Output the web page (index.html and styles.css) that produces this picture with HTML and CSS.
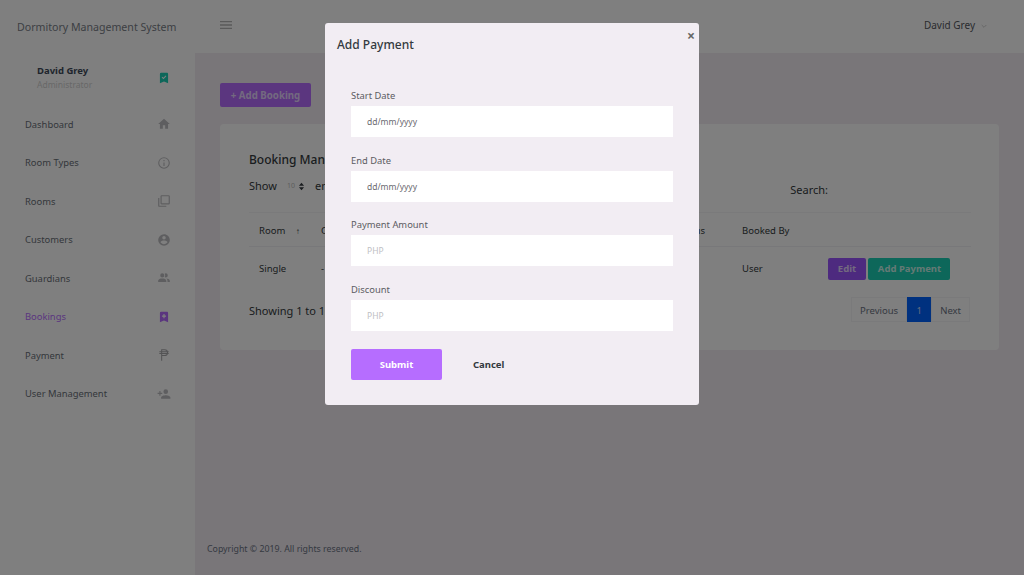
FILE: index.html
```html
<!DOCTYPE html>
<html lang="en">
<head>
    <meta charset="UTF-8">
    <meta name="viewport" content="width=device-width, initial-scale=1.0">
    <title>Dormitory Management System</title>
    <link rel="stylesheet" href="styles.css">
</head>
<body>
    <header class="navbar">
        <div class="brand">Dormitory Management System</div>
        <div class="navbar-main">
            <svg class="menu-icon" viewBox="0 0 24 24"><path d="M3,6H21V8H3V6M3,11H21V13H3V11M3,16H21V18H3V16Z"/></svg>
            <div class="nav-user">David Grey
                <svg class="chevron" viewBox="0 0 24 24"><path d="M5,9L12,16L19,9" fill="none" stroke="currentColor" stroke-width="2"/></svg>
            </div>
        </div>
    </header>

    <div class="page">
        <aside class="sidebar">
            <div class="profile">
                <div>
                    <div class="profile-name">David Grey</div>
                    <div class="profile-role">Administrator</div>
                </div>
                <svg class="nav-icon icon-green" viewBox="0 0 24 24"><path fill-rule="evenodd" d="M17,3H7A2,2 0 0,0 5,5V21L12,18L19,21V5C19,3.89 18.1,3 17,3ZM11,14L8,11L9.2,9.8L11,11.6L14.8,7.8L16,9Z"/></svg>
            </div>
            <a class="nav-item">Dashboard
                <svg class="nav-icon" viewBox="0 0 24 24"><path d="M10,20V14H14V20H19V12H22L12,3L2,12H5V20H10Z"/></svg></a>
            <a class="nav-item">Room Types
                <svg class="nav-icon" viewBox="0 0 24 24"><path d="M11,9H13V7H11M12,20C7.59,20 4,16.41 4,12C4,7.59 7.59,4 12,4C16.41,4 20,7.59 20,12C20,16.41 16.41,20 12,20M12,2A10,10 0 0,0 2,12A10,10 0 0,0 12,22A10,10 0 0,0 22,12A10,10 0 0,0 12,2M11,17H13V11H11V17Z"/></svg></a>
            <a class="nav-item">Rooms
                <svg class="nav-icon" viewBox="0 0 24 24"><path d="M20,16V4H8V16H20M22,16A2,2 0 0,1 20,18H8C6.89,18 6,17.1 6,16V4C6,2.89 6.89,2 8,2H20A2,2 0 0,1 22,4V16M16,20V22H4A2,2 0 0,1 2,20V7H4V20H16Z"/></svg></a>
            <a class="nav-item">Customers
                <svg class="nav-icon" viewBox="0 0 24 24"><path d="M12,19.2C9.5,19.2 7.29,17.92 6,16C6.03,14 10,12.9 12,12.9C14,12.9 17.97,14 18,16C16.71,17.92 14.5,19.2 12,19.2M12,5A3,3 0 0,1 15,8A3,3 0 0,1 12,11A3,3 0 0,1 9,8A3,3 0 0,1 12,5M12,2A10,10 0 0,0 2,12A10,10 0 0,0 12,22A10,10 0 0,0 22,12C22,6.47 17.5,2 12,2Z"/></svg></a>
            <a class="nav-item">Guardians
                <svg class="nav-icon" viewBox="0 0 24 24"><path d="M16 17V19H2V17S2 13 9 13 16 17 16 17M12.5 7.5A3.5 3.5 0 1 0 9 11A3.5 3.5 0 0 0 12.5 7.5M15.94 13A5.32 5.32 0 0 1 18 17V19H22V17S22 13.37 15.94 13M15 4A3.39 3.39 0 0 0 13.07 4.59A5 5 0 0 1 13.07 10.41A3.39 3.39 0 0 0 15 11A3.5 3.5 0 0 0 15 4Z"/></svg></a>
            <a class="nav-item active">Bookings
                <svg class="nav-icon" viewBox="0 0 24 24"><path fill-rule="evenodd" d="M17,3H7A2,2 0 0,0 5,5V21L12,18L19,21V5C19,3.89 18.1,3 17,3ZM11,7H13V9.5H15.5V11.5H13V14H11V11.5H8.5V9.5H11Z"/></svg></a>
            <a class="nav-item">Payment
                <svg class="nav-icon icon-peso" viewBox="0 0 24 24"><path d="M8,22V3H13A5,5 0 0,1 13,13H8M4,6.5H20M4,9.5H20" fill="none" stroke="currentColor" stroke-width="1.8"/></svg></a>
            <a class="nav-item">User Management
                <svg class="nav-icon" viewBox="0 0 24 24"><path d="M15,14C12.33,14 7,15.33 7,18V20H23V18C23,15.33 17.67,14 15,14M6,10V7H4V10H1V12H4V15H6V12H9V10M15,12A4,4 0 0,0 19,8A4,4 0 0,0 15,4A4,4 0 0,0 11,8A4,4 0 0,0 15,12Z"/></svg></a>
        </aside>

        <main class="content">
            <div class="content-body">
                <button class="btn btn-add">+ Add Booking</button>
                <section class="card">
                    <h2>Booking Management</h2>
                    <div class="table-tools">
                        <div class="show-entries">Show
                            <span class="select-box">10
                                <svg class="select-arrows" viewBox="0 0 10 14"><path d="M5,1L9,6H1ZM5,13L1,8H9Z"/></svg>
                            </span>
                            entries
                        </div>
                        <div class="search-box">Search:</div>
                    </div>
                    <table class="booking-table">
                        <thead>
                            <tr>
                                <th class="col-room">Room <span class="sort-mark">↑</span></th>
                                <th class="col-info">Check In</th>
                                <th class="col-status">Status</th>
                                <th class="col-by">Booked By</th>
                                <th></th>
                            </tr>
                        </thead>
                        <tbody>
                            <tr>
                                <td>Single</td>
                                <td>-</td>
                                <td class="cell-status">Active</td>
                                <td>User</td>
                                <td class="col-actions">
                                    <button class="btn btn-edit">Edit</button>
                                    <button class="btn btn-pay">Add Payment</button>
                                </td>
                            </tr>
                        </tbody>
                    </table>
                    <div class="table-foot">
                        <div class="table-info">Showing 1 to 1 of 1 entries</div>
                        <div class="pager">
                            <span class="page-link">Previous</span>
                            <span class="page-link current">1</span>
                            <span class="page-link">Next</span>
                        </div>
                    </div>
                </section>
            </div>
            <footer class="footer">Copyright © 2019. All rights reserved.</footer>
        </main>
    </div>

    <div class="overlay"></div>

    <div class="modal">
        <span class="modal-close">×</span>
        <h3>Add Payment</h3>
        <form class="modal-form">
            <div class="form-group">
                <label for="startDate">Start Date</label>
                <input type="text" class="date-input" id="startDate" placeholder="dd/mm/yyyy">
            </div>
            <div class="form-group">
                <label for="endDate">End Date</label>
                <input type="text" class="date-input" id="endDate" placeholder="dd/mm/yyyy">
            </div>
            <div class="form-group">
                <label for="paymentAmount">Payment Amount</label>
                <input type="text" id="paymentAmount" placeholder="PHP">
            </div>
            <div class="form-group">
                <label for="discount">Discount</label>
                <input type="text" id="discount" placeholder="PHP">
            </div>
            <div class="form-actions">
                <button type="button" class="btn btn-submit">Submit</button>
                <button type="button" class="btn btn-cancel">Cancel</button>
            </div>
        </form>
    </div>
</body>
</html>
```

FILE: styles.css
```css
* {
    box-sizing: border-box;
}
body {
    margin: 0;
    height: 575px;
    overflow: hidden;
    display: flex;
    flex-direction: column;
    font-family: "Noto Sans", sans-serif;
    font-size: 10px;
    color: #343a40;
    background-color: #f2edf3;
}
.navbar {
    height: 53px;
    flex-shrink: 0;
    display: flex;
    background-color: white;
}
.brand {
    width: 195px;
    padding: 19px 0 0 17px;
    font-size: 10.6px;
    line-height: 16px;
    color: #7a7f88;
    white-space: nowrap;
}
.navbar-main {
    flex: 1;
    display: flex;
    justify-content: space-between;
    padding: 17px 36px 0 23px;
}
.menu-icon {
    width: 16px;
    height: 16px;
    fill: #b5b5b5;
}
.nav-user {
    display: flex;
    gap: 5px;
    height: 16px;
    font-size: 10px;
    line-height: 16px;
    color: #55585e;
}
.chevron {
    width: 8px;
    height: 8px;
    margin-top: 5px;
    color: #b5b5b5;
}
.page {
    flex: 1;
    display: flex;
    min-height: 0;
}
.sidebar {
    width: 195px;
    flex-shrink: 0;
    padding-top: 10px;
    background-color: white;
}
.profile {
    height: 42px;
    padding: 0 24px 12px 37px;
    display: flex;
    justify-content: space-between;
    align-items: center;
}
.profile-name {
    font-size: 9.5px;
    font-weight: bold;
    line-height: 14px;
    color: #3e4b5b;
}
.profile-role {
    font-size: 8.5px;
    line-height: 14px;
    color: #d0d0d0;
}
.nav-item {
    height: 38.5px;
    padding: 0 24px 0 25px;
    display: flex;
    justify-content: space-between;
    align-items: center;
    font-size: 9.4px;
    color: #6a6f78;
}
.nav-icon {
    width: 14px;
    height: 14px;
    fill: #bdbdc0;
    color: #bdbdc0;
}
.icon-green {
    fill: #1bcfb4;
}
.icon-peso {
    color: #a8a8ab;
}
.nav-item.active {
    color: #b66dff;
}
.nav-item.active .nav-icon {
    fill: #b66dff;
}
.content {
    flex: 1;
    display: flex;
    flex-direction: column;
    min-width: 0;
}
.content-body {
    flex: 1;
    padding: 30px 25px 0;
}
.btn {
    border: none;
    font-family: inherit;
    font-weight: bold;
    color: white;
    border-radius: 2px;
}
.btn-add {
    display: block;
    width: 91px;
    height: 24px;
    padding: 0;
    font-size: 9.7px;
    color: #e6d4ff;
    background-color: #b66dff;
    margin-bottom: 17px;
}
.card {
    height: 226px;
    padding: 27px 29px 0;
    border-radius: 4px;
    background-color: white;
}
h2 {
    margin: 0;
    font-size: 12px;
    font-weight: 500;
    line-height: 18px;
    color: #343a40;
}
.table-tools {
    display: flex;
    justify-content: space-between;
    margin-top: 4px;
    padding-right: 142px;
    font-size: 11px;
    line-height: 18px;
}
.show-entries {
    display: flex;
    align-items: center;
    gap: 10px;
}
.select-box {
    display: flex;
    align-items: center;
    gap: 3px;
    font-size: 7px;
    color: #bbb;
}
.select-arrows {
    width: 7px;
    height: 9px;
    fill: #343a40;
}
.search-box {
    margin-top: 8px;
}
.booking-table {
    width: 722px;
    margin-top: 13px;
    border-collapse: collapse;
    table-layout: fixed;
    font-size: 9.5px;
}
.booking-table th {
    height: 34px;
    padding: 1px 10px 0;
    text-align: left;
    font-weight: normal;
    border-top: 1px solid #f4f4f7;
    border-bottom: 1px solid #f0f0f4;
}
.booking-table td {
    height: 44px;
    padding: 0 10px;
}
.col-room {
    width: 62px;
}
.col-info {
    width: 300px;
}
.booking-table .col-status {
    width: 121px;
    padding-right: 27px;
    text-align: right;
}
.booking-table .cell-status {
    padding-right: 60px;
    text-align: right;
}
.col-by {
    width: 85px;
}
.booking-table .col-actions {
    padding-left: 11px;
    white-space: nowrap;
}
.sort-mark {
    margin-left: 8px;
    font-size: 8px;
}
.btn-edit, .btn-pay {
    height: 22px;
    padding: 0;
    font-size: 9.5px;
    color: #e6d4ff;
}
.btn-edit {
    width: 38px;
    background-color: #9a55ff;
}
.btn-pay {
    width: 82px;
    color: #c9f3ea;
    background-color: #1bcfb4;
}
.table-foot {
    display: flex;
    justify-content: space-between;
    align-items: center;
    width: 721px;
    padding-top: 6px;
}
.table-info {
    padding-top: 3px;
    font-size: 11px;
}
.pager {
    display: flex;
    font-size: 9.5px;
    color: #6c7383;
}
.page-link {
    height: 25px;
    padding: 0 8px;
    line-height: 25px;
    border: 1px solid #f4f4f7;
}
.page-link.current {
    width: 24px;
    padding: 0;
    text-align: center;
    color: #c8d8ff;
    border-color: #0062ff;
    background-color: #0062ff;
}
.footer {
    padding: 0 12px 19px;
    font-size: 8.8px;
    line-height: 14px;
    color: #6c7383;
}
.overlay {
    position: fixed;
    top: 0;
    left: 0;
    width: 100%;
    height: 100%;
    background-color: rgba(0, 0, 0, 0.5);
}
.modal {
    position: fixed;
    top: 23px;
    left: 325px;
    width: 374px;
    height: 382px;
    padding: 13px 26px 0;
    border-radius: 3px;
    background-color: #f2edf3;
}
.modal h3 {
    margin: 0 0 0 -14px;
    font-size: 12px;
    font-weight: 500;
    line-height: 17px;
    color: #343a40;
}
.modal-close {
    position: absolute;
    top: 5px;
    right: 4px;
    font-size: 14px;
    line-height: 16px;
    font-weight: bold;
    color: #666;
}
.modal-form {
    margin-top: 35px;
}
.form-group {
    margin-bottom: 15.7px;
}
label {
    display: block;
    margin-bottom: 3px;
    font-size: 9.4px;
    line-height: 15px;
    color: #5c5c62;
}
input {
    display: block;
    width: 100%;
    height: 31px;
    padding: 0 16px;
    border: none;
    font-family: inherit;
    font-size: 8.5px;
    background-color: white;
}
input::placeholder {
    color: #c0c0c4;
}
.date-input::placeholder {
    color: #6a6a6f;
}
.form-actions {
    display: flex;
    align-items: center;
    margin-top: 17.5px;
}
.btn-submit {
    width: 91px;
    height: 31px;
    font-size: 9.5px;
    background-color: #b66dff;
}
.btn-cancel {
    margin-left: 31px;
    padding: 0;
    font-size: 9.5px;
    color: #343a40;
    background: none;
}
```
